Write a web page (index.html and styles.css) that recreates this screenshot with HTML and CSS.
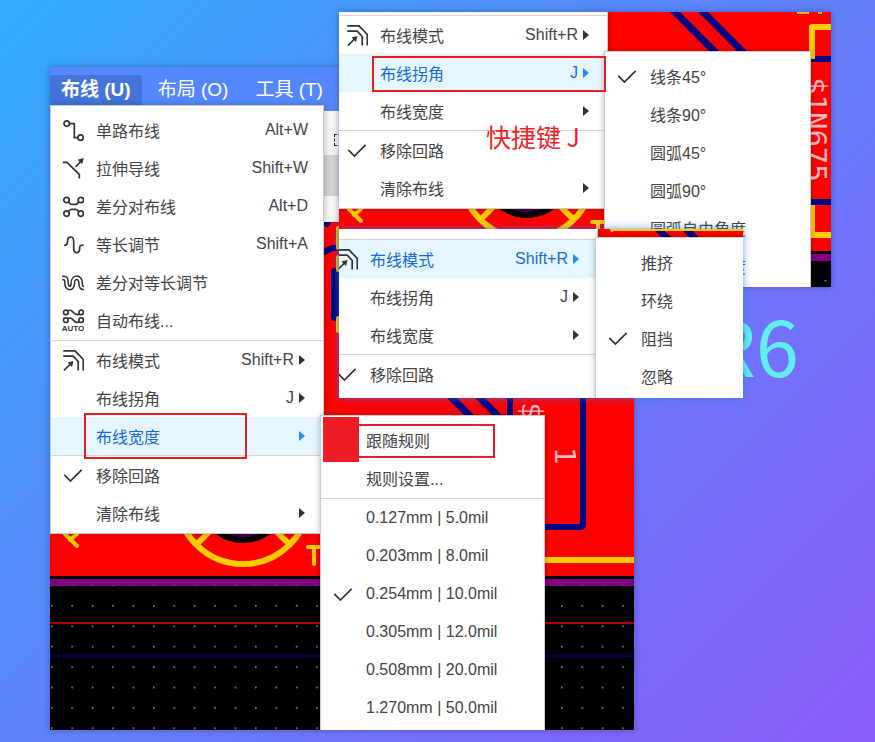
FILE: index.html
```html
<!DOCTYPE html>
<html lang="zh-CN">
<head>
<meta charset="utf-8">
<title>布线</title>
<link rel="stylesheet" href="styles.css">
</head>
<body>
<svg class="defs" aria-hidden="true">
  <defs>
    <pattern id="dots" x="51" y="605" width="20.4" height="20.4" patternUnits="userSpaceOnUse">
      <rect width="1.6" height="1.6" fill="#8a8a8a"/>
    </pattern>
    <g id="pcb">
      <rect x="50" y="222" width="584" height="508" fill="#000"/>
      <rect x="50" y="586" width="584" height="144" fill="url(#dots)"/>
      <rect x="50" y="222" width="584" height="354" fill="#f00"/>
      <rect x="50" y="579" width="584" height="7" fill="#800080"/>
      <rect x="50" y="622" width="584" height="2" fill="#b00000"/>
      <rect x="50" y="655" width="584" height="2" fill="#000060"/>
      <g fill="none" stroke="#000080" stroke-width="6">
        <path d="M325 226L329 221M322 253L332 248H345"/>
        <rect x="510" y="384" width="73" height="143" rx="2"/>
        <path stroke-width="7" d="M377 323L487 433M405 323L515 433"/>
      </g>
      <rect x="331" y="268" width="20" height="53" rx="4" fill="#000080"/>
      <circle cx="243" cy="498" r="42" fill="#400050" stroke="#000" stroke-width="6"/>
      <g fill="none" stroke="#ffcc00" stroke-width="6">
        <circle cx="243" cy="498" r="66"/>
        <path stroke-linejoin="round" d="M196 545L222 519M290 545L264 519M528 384V352H552M528 530V560H634M513 336h12M534 336h4"/>
        <path stroke-width="4" stroke-linecap="round" d="M64 533L77 546M77 534L70 540M308 547H322M314 547V564M338 228v20M338 257v13M338 318v13"/>
        <path stroke-width="2" d="M340 331H472"/>
      </g>
      <text class="net" transform="translate(522 402) rotate(90)">$1N675</text>
      <text class="net" transform="translate(555 447) rotate(90)">1</text>
    </g>
    <g id="i-single"><circle cx="4.7" cy="4.6" r="2.7"/><circle cx="18.6" cy="18.6" r="2.7"/><path d="M7.5 4.6H12.3V18.6H16"/></g>
    <g id="i-stretch"><path d="M.8 5.3H5L17.3 17.3V21.5M13.5 10L19 4"/><path class="solid" d="M21.8 1L20.2 7L15.6 2.8Z"/></g>
    <g id="i-pair"><circle cx="4.5" cy="5" r="2.7"/><circle cx="18.8" cy="5" r="2.7"/><circle cx="4.5" cy="18.6" r="2.7"/><circle cx="18.8" cy="18.6" r="2.7"/><path d="M6.5 7C8 9 8.5 9.3 9.5 9.3H13.8C15 9.3 15.5 9 16.8 7M6.5 16.6C8 14.6 8.5 14.3 9.5 14.3H13.8C15 14.3 15.5 14.6 16.8 16.6"/></g>
    <g id="i-length"><path d="M2 12.5C5 12.5 5.5 11 5.5 8.5C5.5 2.5 11.7 2.5 11.7 8.5V15.5C11.7 21 17.6 21 17.6 15.5C17.6 12.5 18.5 12 21.6 12"/></g>
    <g id="i-pairlength">
      <path id="wave" stroke-width="5" d="M.3 7H2C4.5 7 4.5 9 4.5 11.5C4.5 18.7 10.8 18.7 10.8 12.5C10.8 5 18.6 5 18.6 12C18.6 15.5 19 17 22 17"/>
      <path stroke="#fff" stroke-width="1.9" d="M.3 7H2C4.5 7 4.5 9 4.5 11.5C4.5 18.7 10.8 18.7 10.8 12.5C10.8 5 18.6 5 18.6 12C18.6 15.5 19 17 22 17"/>
    </g>
    <g id="i-auto"><circle cx="3.8" cy="3.4" r="2.3"/><circle cx="19.2" cy="3.4" r="2.3"/><circle cx="3.8" cy="11.2" r="2.3"/><circle cx="19.2" cy="11.2" r="2.3"/><path d="M5.4 2C9 .2 10 2 12 4C14 6 16 6 17.6 4.8M5.4 9.8C9 8 10 9.8 12 11.8C14 13.8 16 13.8 17.6 12.6"/><text class="auto" x="11" y="22" text-anchor="middle">AUTO</text></g>
    <g id="i-mode"><path d="M1.3 1.8H13L21.3 10.5V21.5M1.3 7.2H11.2L16.2 12.5V21.5M2 21.3L9 14.5"/><path class="solid" d="M11.5 12L10 18L5.5 13.6Z"/></g>
    <g id="i-check"><path d="M2.3 10.8L8.4 17L19.6 5.8"/></g>
  </defs>
</svg>

<main class="canvas">
  <div class="designator">R6</div>

  <section class="shot shot-width">
    <svg class="board" viewBox="50 67 584 663" aria-hidden="true"><use href="#pcb"/></svg>
    <nav class="menubar">
      <button class="tab tab-open">布线 (U)</button>
      <button class="tab">布局 (O)</button>
      <button class="tab">工具 (T)</button>
    </nav>
    <div class="toolbar"><i class="dashed"></i></div>
    <div class="menu main-menu" role="menu">
      <button class="item"><svg class="icon"><use href="#i-single"/></svg><span>单路布线</span><kbd>Alt+W</kbd></button>
      <button class="item"><svg class="icon"><use href="#i-stretch"/></svg><span>拉伸导线</span><kbd>Shift+W</kbd></button>
      <button class="item"><svg class="icon"><use href="#i-pair"/></svg><span>差分对布线</span><kbd>Alt+D</kbd></button>
      <button class="item"><svg class="icon"><use href="#i-length"/></svg><span>等长调节</span><kbd>Shift+A</kbd></button>
      <button class="item"><svg class="icon"><use href="#i-pairlength"/></svg><span>差分对等长调节</span></button>
      <button class="item"><svg class="icon"><use href="#i-auto"/></svg><span>自动布线...</span></button>
      <hr>
      <button class="item more"><svg class="icon"><use href="#i-mode"/></svg><span>布线模式</span><kbd>Shift+R</kbd></button>
      <button class="item more"><span>布线拐角</span><kbd>J</kbd></button>
      <button class="item more current"><span>布线宽度</span></button>
      <hr>
      <button class="item"><svg class="icon"><use href="#i-check"/></svg><span>移除回路</span></button>
      <button class="item more"><span>清除布线</span></button>
    </div>
    <div class="menu width-menu" role="menu">
      <button class="item"><span>跟随规则</span></button>
      <button class="item"><span>规则设置...</span></button>
      <hr>
      <button class="item"><span>0.127mm | 5.0mil</span></button>
      <button class="item"><span>0.203mm | 8.0mil</span></button>
      <button class="item"><svg class="icon"><use href="#i-check"/></svg><span>0.254mm | 10.0mil</span></button>
      <button class="item"><span>0.305mm | 12.0mil</span></button>
      <button class="item"><span>0.508mm | 20.0mil</span></button>
      <button class="item"><span>1.270mm | 50.0mil</span></button>
    </div>
    <div class="mark mark-width"></div>
    <div class="mark mark-rule"></div>
    <div class="block"></div>
  </section>

  <section class="shot shot-corner">
    <svg class="board" viewBox="55 337 492 275" aria-hidden="true"><use href="#pcb"/></svg>
    <div class="menu main-menu" role="menu">
      <hr>
      <button class="item more"><svg class="icon"><use href="#i-mode"/></svg><span>布线模式</span><kbd>Shift+R</kbd></button>
      <button class="item more current"><span>布线拐角</span><kbd>J</kbd></button>
      <button class="item more"><span>布线宽度</span></button>
      <hr>
      <button class="item"><svg class="icon"><use href="#i-check"/></svg><span>移除回路</span></button>
      <button class="item more"><span>清除布线</span></button>
    </div>
    <div class="menu corner-menu" role="menu">
      <button class="item"><svg class="icon"><use href="#i-check"/></svg><span>线条45°</span></button>
      <button class="item"><span>线条90°</span></button>
      <button class="item"><span>圆弧45°</span></button>
      <button class="item"><span>圆弧90°</span></button>
      <button class="item"><span>圆弧自由角度</span></button>
      <button class="item"><span>线条自由角度</span></button>
    </div>
    <div class="mark mark-corner"></div>
    <div class="note">快捷键 J</div>
  </section>

  <section class="shot shot-mode">
    <svg class="board" viewBox="65 330 404 169" aria-hidden="true"><use href="#pcb"/></svg>
    <div class="menu main-menu" role="menu">
      <hr>
      <button class="item more current"><svg class="icon"><use href="#i-mode"/></svg><span>布线模式</span><kbd>Shift+R</kbd></button>
      <button class="item more"><span>布线拐角</span><kbd>J</kbd></button>
      <button class="item more"><span>布线宽度</span></button>
      <hr>
      <button class="item"><svg class="icon"><use href="#i-check"/></svg><span>移除回路</span></button>
    </div>
    <div class="menu mode-menu" role="menu">
      <button class="item"><span>推挤</span></button>
      <button class="item"><span>环绕</span></button>
      <button class="item"><svg class="icon"><use href="#i-check"/></svg><span>阻挡</span></button>
      <button class="item"><span>忽略</span></button>
    </div>
  </section>
</main>
</body>
</html>
```
FILE: styles.css
```css
* { box-sizing: border-box; }

body {
  margin: 0;
  font-family: "Liberation Sans", "Noto Sans CJK SC", sans-serif;
  font-size: 16px;
  color: #444;
}

button {
  font: inherit;
  color: inherit;
  border: 0;
  background: none;
  padding: 0;
}

.defs { position: absolute; width: 0; height: 0; }

.canvas {
  position: relative;
  min-height: 100vh;
  overflow: hidden;
  background: linear-gradient(135deg, #32acfa 0%, #5c86fa 45%, #7570fa 72%, #895cfa 100%);
}

.designator {
  position: absolute;
  left: 707px;
  top: 298px;
  font-family: "Noto Sans CJK SC", sans-serif;
  font-size: 77px;
  line-height: 92px;
  color: #5ff0ee;
}

/* Floating windows on the canvas */
.shot {
  position: absolute;
  overflow: hidden;
  box-shadow: 0 0 6px rgba(40, 50, 110, .5);
}
.shot-width { left: 50px; top: 67px; width: 584px; height: 663px; }
.shot-corner { left: 339px; top: 12px; width: 492px; height: 275px; }
.shot-mode { left: 339px; top: 229px; width: 404px; height: 169px; box-shadow: 0 0 8px rgba(50, 120, 240, .7); }

.board { position: absolute; inset: 0; width: 100%; height: 100%; }
.net { font-family: "DejaVu Sans Mono", monospace; font-size: 29px; font-weight: 200; fill: #ffb8c0; }

.menubar {
  position: relative;
  display: flex;
  align-items: flex-start;
  gap: 5px;
  height: 44px;
  padding-top: 8px;
  background: #5588ff;
}
.tab {
  height: 30px;
  padding: 0 11px;
  border-radius: 3px 3px 0 0;
  font-size: 19px;
  line-height: 30px;
  color: #fff;
}
.tab-open { background: #4573da; font-weight: 700; }

.toolbar {
  position: relative;
  display: flex;
  height: 111px;
  padding: 23px 0 0 284px;
  background: linear-gradient(#f7f7f7 44px, #d2d2d2 44px, #d2d2d2 85px, #f7f7f7 85px);
}
.dashed { width: 12px; height: 12px; border: 1px dashed #222; }

.menu {
  position: absolute;
  padding: 5px 0;
  border: 1px solid #ccc;
  background: #fff;
  box-shadow: 0 0 6px rgba(0, 0, 0, .28);
}
.menu hr { margin: 0; border: 0; height: 1px; background: #d4d4d4; }
.shot-width .menu hr:first-of-type { margin-top: 1px; }

.main-menu { width: 274px; }
.shot-width .main-menu { left: 0; top: 38px; padding-bottom: 1px; }
.shot-corner .main-menu { left: -5px; top: -1px; padding: 3px 0 1px; }
.shot-mode .main-menu { left: -15px; top: -1px; padding-top: 10px; }
.width-menu { left: 270px; top: 348px; width: 225px; }
.corner-menu { left: 265px; top: 39px; width: 207px; }
.mode-menu { left: 256px; top: 8px; width: 160px; }

.item {
  display: grid;
  grid-template-columns: 22px 1fr auto 9px;
  column-gap: 12px;
  align-items: center;
  width: 100%;
  height: 38px;
  padding-left: 11px;
  text-align: left;
  white-space: nowrap;
}
.item span { grid-column: 2; grid-row: 1; }
.item kbd { grid-column: 3 / 5; grid-row: 1; padding-right: 15px; font: inherit; }
.more kbd { padding-right: 29px; }
.more::after {
  content: "";
  grid-column: 4;
  grid-row: 1;
  width: 6px;
  height: 10px;
  margin-left: -15px;
  background: #333;
  clip-path: polygon(0 0, 100% 50%, 0 100%);
}
.current { background: #e5f6ff; color: #1769dd; }
.current::after { background: #1890ff; }

.icon {
  grid-column: 1;
  grid-row: 1;
  width: 22px;
  height: 23px;
  fill: none;
  stroke: #333;
  stroke-width: 1.7;
}
.solid { fill: #333; stroke: none; }
.auto { font-size: 8px; font-weight: 700; fill: #333; stroke: none; }

/* Annotations over the windows */
.mark { position: absolute; border: 2px solid #ec1c24; }
.mark-width { left: 34px; top: 346px; width: 163px; height: 46px; }
.mark-rule { left: 274px; top: 357px; width: 171px; height: 34px; }
.mark-corner { left: 33px; top: 44px; width: 234px; height: 36px; }
.block { position: absolute; left: 273px; top: 350px; width: 36px; height: 45px; background: #ed1c24; }
.note {
  position: absolute;
  left: 147px;
  top: 108px;
  font-family: "Noto Sans CJK SC", sans-serif;
  font-size: 25px;
  line-height: 32px;
  color: #f0222a;
}
```
